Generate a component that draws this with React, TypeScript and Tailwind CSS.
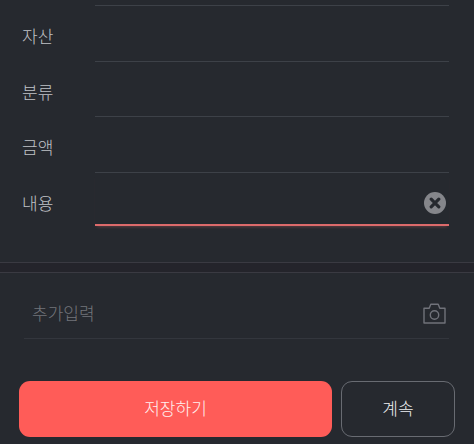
const font = { fontFamily: '"Noto Sans CJK KR", "Noto Sans", sans-serif' }

function Row({ label }: { label: string }) {
  return (
    <div className="flex h-[55.5px] items-center pl-[22px] pr-[25px]">
      <div className="w-[73px] shrink-0 pt-[4px] text-[17px] font-light leading-none text-[#c0c2c7]">{label}</div>
      <div className="h-full flex-1 border-b border-[#3d4148]" />
    </div>
  )
}

export default function App() {
  return (
    <div style={font} className="flex h-[444px] w-[474px] flex-col overflow-hidden bg-[#26292f]">
      <div className="h-[6px] pl-[95px] pr-[25px]">
        <div className="h-full border-b border-[#3d4148]" />
      </div>
      <Row label="자산" />
      <Row label="분류" />
      <Row label="금액" />
      <div className="flex h-[53.5px] items-center pl-[22px] pr-[25px]">
        <div className="w-[73px] shrink-0 pt-[6px] text-[17px] font-light leading-none text-[#c0c2c7]">내용</div>
        <div className="flex h-full flex-1 items-center justify-end border-b-2 border-[#dd6a6b] pr-[3px] pt-[9px] shadow-[0_3px_3px_-2px_rgba(221,106,107,0.3)]">
          <div className="flex h-[22px] w-[22px] items-center justify-center rounded-full bg-[#85868b]">
            <svg viewBox="0 0 12 12" className="h-[12px] w-[12px]" fill="none" stroke="#26292f" strokeWidth="3.2" strokeLinecap="round">
              <path d="M2.2 2.2 9.8 9.8M9.8 2.2 2.2 9.8" />
            </svg>
          </div>
        </div>
      </div>
      <div className="mt-[35.5px] h-[11px] border-y border-[#3a3a42] bg-[#24242b]" />
      <div className="ml-[24px] mr-[25px] mt-[10px] flex h-[56px] items-center justify-between border-b border-[#33363d] pl-[8px] pr-[3px]">
        <span className="pt-[4px] text-[17px] font-light leading-none text-[#73757b]">추가입력</span>
        <svg viewBox="0 0 23 21" className="mt-[6px] h-[21px] w-[23px]" fill="none" stroke="#70727a" strokeWidth="1.4" strokeLinejoin="round">
          <path d="M1 5.2H6.2L7.8 1.2H15.2L16.8 5.2H22V20H1Z" />
          <circle cx="11.5" cy="12" r="4.2" />
        </svg>
      </div>
      <div className="mt-[42.5px] flex gap-[9px] pl-[19px] pr-[19px]">
        <button className="flex h-[56px] w-[313px] items-center justify-center rounded-[11px] bg-[#ff5c58] pb-[2px] text-[17px] font-light text-[#fff0ef]">저장하기</button>
        <button className="flex h-[56px] w-[114px] items-center justify-center rounded-[11px] border-[1.5px] border-[#686b72] pb-[2px] text-[17px] font-light text-[#eeeff1]">계속</button>
      </div>
    </div>
  )
}
